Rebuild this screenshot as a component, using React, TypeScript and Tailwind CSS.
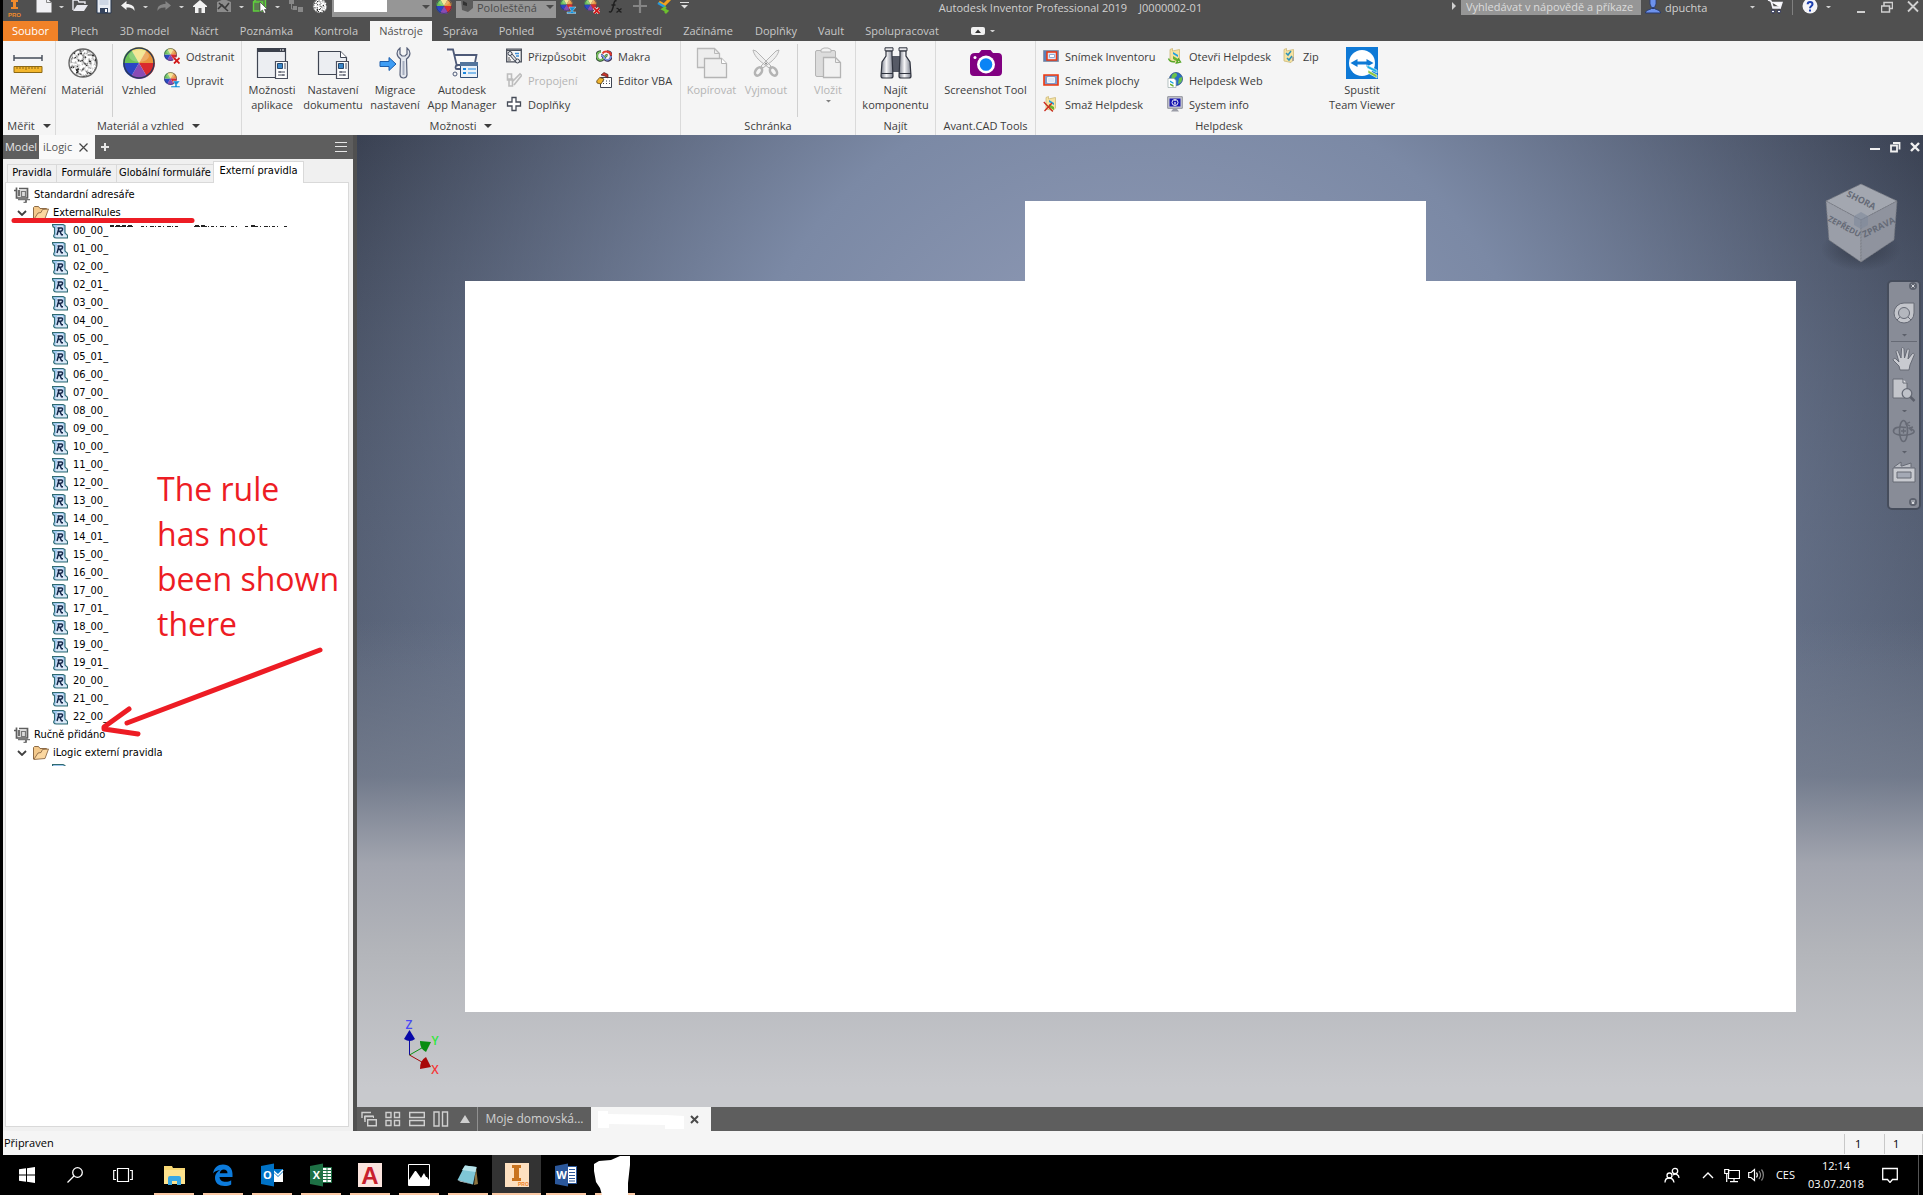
import type { ReactNode } from "react";
import clsx from "clsx";

type IconProps = { children?: ReactNode; className?: string; box?: string };

const Svg = ({ children, className = "size-4", box = "0 0 16 16" }: IconProps) => (
  <svg viewBox={box} className={clsx("shrink-0", className)} fill="none" aria-hidden="true">
    {children}
  </svg>
);

const Caret = ({ className = "w-[5px] text-[#d0d0d0]" }: { className?: string }) => (
  <Svg box="0 0 8 4" className={clsx("h-auto", className)}>
    <path d="M0 0h8L4 4z" fill="currentColor" />
  </Svg>
);

const WheelShape = () => (
  <g>
    <path d="M0 0L8-13.8A16 16 0 0 0-8-13.8z" fill="#f0e07a" />
    <path d="M0 0L16 0A16 16 0 0 0 8-13.8z" fill="#e8953c" />
    <path d="M0 0L8 13.8A16 16 0 0 0 16 0z" fill="#d92a2e" />
    <path d="M0 0L-8 13.8A16 16 0 0 0 8 13.8z" fill="#8a4bb5" />
    <path d="M0 0L-16 0A16 16 0 0 0-8 13.8z" fill="#2c46c4" />
    <path d="M0 0L-8-13.8A16 16 0 0 0-16 0z" fill="#6cc257" />
    <circle r="15" stroke="#2b3a58" strokeWidth="1.4" fill="none" />
    <ellipse cy="-7" rx="10" ry="6" fill="#fff" opacity=".22" />
  </g>
);

const Wheel = ({ className = "size-4" }: { className?: string }) => (
  <Svg className={className} box="-16 -16 32 32">
    <WheelShape />
  </Svg>
);

const WheelRemove = () => (
  <Svg>
    <g transform="translate(6.5 6.5) scale(.4)">
      <WheelShape />
    </g>
    <path d="M10 10l5 5m0-5l-5 5" stroke="#fff" strokeWidth="3" />
    <path d="M10 10l5.500 5.500m0-5.500l-5.500 5.500" stroke="#d01818" strokeWidth="1.800" />
  </Svg>
);

const WheelAdjust = () => (
  <Svg>
    <g transform="translate(6.5 6.5) scale(.4)">
      <WheelShape />
    </g>
    <path d="M9 9h7l-3 3.500v1.500h3v1.500H7V14h4v-1.500z" fill="#1590d8" stroke="#fff" strokeWidth=".4" />
  </Svg>
);

const Sphere = ({ className = "size-4" }: { className?: string }) => (
  <Svg className={className} box="0 0 32 32">
    <defs>
      <filter id="grain" x="0" y="0" width="1" height="1">
        <feTurbulence type="fractalNoise" baseFrequency=".32" numOctaves="3" seed="4" />
        <feColorMatrix values="3 0 0 0 -.85  3 0 0 0 -.85  3 0 0 0 -.85  0 0 0 0 1" />
        <feComposite in2="SourceGraphic" operator="in" />
      </filter>
    </defs>
    <circle cx="16" cy="16" r="14" fill="#a9a9a9" filter="url(#grain)" />
    <circle cx="16" cy="16" r="14" fill="#fff" fillOpacity=".2" stroke="#666" strokeWidth="1.400" />
  </Svg>
);

const Rule = ({ className = "size-4" }: { className?: string }) => (
  <Svg className={className}>
    <path d="M.5 1.500h10.500l2 1v7c.5 2.500 2.500 1 2.500 3.500v2H4.500c-3 0-3.500-2-2-4V4.500C1.500 4.500.5 4 .5 1.500z" fill="#9fc6ee" />
    <path d="M5 3h6l1 8 3 1v2.500H5c-2 0-2-2-1-3z" fill="#dbe9f7" />
    <path d="M.5 1.500h10.500l2 1v7c.5 2.500 2.500 1 2.500 3.500v2H4.500c-3 0-3.500-2-2-4V4.500C1.500 4.500.5 4 .5 1.500z" stroke="#2f6a70" strokeWidth="1.100" />
    <path d="M5 12L7 5M5.500 5h4c1.500 0 1.500 3-1 3.300H6M8 8.500l1.500 3.300h1.500" stroke="#14264a" strokeWidth="1.500" />
  </Svg>
);

const RootIcon = () => (
  <Svg>
    <path d="M3 3h10v9H3z" fill="#dcdcdc" />
    <path d="M0 3.500h2.500M2.500.500v10.500h11.500M5 1.500h8.500v10M12 12v3.500M5 3v6" stroke="#5f5f5f" strokeWidth="1.700" />
    <path d="M4 12.700h12M9.500 15.300h3M7.500 4.500h4v5h-4z" stroke="#777" strokeWidth="1.200" />
  </Svg>
);

const Folder = () => (
  <Svg>
    <path d="M.5 14V2.500l1-1h4l1.500 2h6.500V6" fill="#f4c98b" stroke="#8d6a45" />
    <path d="M.8 14.500L5 8l3-.5 1.500-3 6-.5-3.500 9.500z" fill="#fbd7a0" stroke="#8d6a45" strokeWidth=".9" />
  </Svg>
);

/* ---------- ribbon icons, 32px ---------- */

const big = "size-8";

const MeasureIcon = () => (
  <Svg className={big} box="0 0 32 32">
    <path d="M2 8v6M30 8v6M2 11h28" stroke="#444c58" strokeWidth="1.400" />
    <path d="M2 19.500h28v6H2z" fill="#f3b62c" stroke="#8d6914" />
    <path d="M5 20v2m3-2v2m3-2v2m3-2v3m3-3v2m3-2v2m3-2v2m3-2v2" stroke="#8d6914" />
  </Svg>
);

const PanelBadge = () => (
  <g>
    <path d="M19.500 14.500h12v17h-12z" fill="#fdfdfd" stroke="#4b4f5e" strokeWidth="1.200" />
    <path d="M21.500 16.500h5v5h-5z" fill="#3a86c8" stroke="#27496e" />
    <path d="M28 17h2m-2 2h2m-2 2h2M22 25h7m-7 3h7m-5-4v2m3 1v2" stroke="#4b4f5e" />
  </g>
);

const AppOptionsIcon = () => (
  <Svg className={big} box="0 0 32 32">
    <path d="M1.500 1.500h28v29h-28z" fill="#eceef2" stroke="#3f4552" strokeWidth="1.200" />
    <path d="M1 1h29v4H1z" fill="#3b404c" />
    <path d="M24 3h1m1 0h2" stroke="#fff" />
    <PanelBadge />
  </Svg>
);

const DocSettingsIcon = () => (
  <Svg className={big} box="0 0 32 32">
    <path d="M1.500 4.500h22l6 6v17h-28z" fill="#eceef2" stroke="#3f4552" strokeWidth="1.200" />
    <path d="M23.500 4.500v6h6" fill="#fff" stroke="#3f4552" />
    <PanelBadge />
  </Svg>
);

const MigrateIcon = () => (
  <Svg className={big} box="0 0 32 32">
    <path d="M1 14.500h9v-4l7 6.500-7 6.500v-4H1z" fill="#3e9df4" stroke="#1c5daa" />
    <path
      d="M21 1c-4 3-4 8 .5 11l-.5 16c.5 4 6.500 4 7 0l-.5-16c4.500-3 4.500-8 .5-11v6l-2 2h-3l-2-2z"
      fill="#e4e7ee"
      stroke="#59627a"
      strokeWidth="1.200"
    />
    <path d="M24.500 14v14" stroke="#a7aec0" strokeWidth="2" />
  </Svg>
);

const CartIcon = () => (
  <Svg className={big} box="0 0 32 32">
    <path d="M1 2.500h6l4 17M8 8h22.500l-2 10H11c-2 1-2 4 0 4h3" stroke="#4e5a78" strokeWidth="1.800" fill="#fafafa" />
    <circle cx="9" cy="27" r="2" stroke="#4e5a78" />
    <path d="M14.500 15.500h17v15h-17z" fill="#eaf1f8" stroke="#2f4c74" />
    <path d="M14 15h18v4H14z" fill="#53759c" />
    <path d="M17 22h3m-3 4h3" stroke="#1987e0" strokeWidth="2" />
    <path d="M22 22h8m-8 4h8" stroke="#1987e0" />
  </Svg>
);

const CopyIcon = () => (
  <Svg className={big} box="0 0 32 32">
    <path d="M1.500 1.500h17l5 5v14h-22z" fill="#ededed" stroke="#b9b9b9" strokeWidth="1.300" />
    <path d="M18.500 1.500v5h5" stroke="#b9b9b9" />
    <path d="M8.500 11.500h17l5 5v14h-22z" fill="#f0f0f0" stroke="#b4b4b4" strokeWidth="1.300" />
    <path d="M25.500 11.500v5h5" fill="#fff" stroke="#b4b4b4" />
  </Svg>
);

const CutIcon = () => (
  <Svg className={big} box="0 0 32 32">
    <path d="M3 3c1 5 5 10 11 14l5 4 2-2L6 4zM29 3c-1 5-5 10-11 14l-5 4-2-2L26 4z" fill="#efefef" stroke="#b4b4b4" />
    <ellipse cx="8.500" cy="24.500" rx="3" ry="4.500" transform="rotate(35 8.500 24.500)" stroke="#b4b4b4" strokeWidth="2.600" />
    <ellipse cx="23.500" cy="24.500" rx="3" ry="4.500" transform="rotate(-35 23.500 24.500)" stroke="#b4b4b4" strokeWidth="2.600" />
    <circle cx="16" cy="16.500" r="1" fill="#888" />
  </Svg>
);

const PasteIcon = () => (
  <Svg className={big} box="0 0 32 32">
    <rect x="3.500" y="3.500" width="20" height="26" rx="1.500" fill="#dcdcdc" stroke="#b4b4b4" />
    <path d="M9 5V2.500l3-1.500h4l3 1.500V5z" fill="#f2f2f2" stroke="#b4b4b4" />
    <path d="M11.500 10.500h12l5 5v15h-17z" fill="#f1f1f1" stroke="#b4b4b4" strokeWidth="1.300" />
    <path d="M23.500 10.500v5h5" stroke="#b4b4b4" />
  </Svg>
);

const BinocularsIcon = () => (
  <Svg className={big} box="0 0 32 32">
    <defs>
      <linearGradient id="steel" x1="0" x2="1">
        <stop offset="0" stopColor="#767b88" />
        <stop offset=".45" stopColor="#f6f6f8" />
        <stop offset="1" stopColor="#7c818e" />
      </linearGradient>
    </defs>
    <path d="M11 9h10v16H11z" fill="#565a66" />
    <path d="M6 4h6v5l1 20q0 2-2 2H3q-2 0-2-2l1-14 4-6z" fill="url(#steel)" stroke="#30343f" strokeWidth="1.200" />
    <path d="M26 4h-6v5l-1 20q0 2 2 2h8q2 0 2-2l-1-14-4-6z" fill="url(#steel)" stroke="#30343f" strokeWidth="1.200" />
    <path d="M5 .8h8v3H5zM19 .8h8v3h-8z" fill="#e9e9ec" stroke="#30343f" />
    <path d="M1 26.500h12M19 26.500h12" stroke="#30343f" />
  </Svg>
);

const CameraIcon = () => (
  <Svg className={big} box="0 0 32 32">
    <path d="M9 6l2.500-3h9L23 6h5q4 0 4 4v15q0 4-4 4H4q-4 0-4-4V11q0-5 5-5z" fill="#810081" />
    <circle cx="16" cy="17.500" r="9" fill="#fff" />
    <circle cx="16" cy="17.500" r="6.300" fill="#0a84f5" />
    <circle cx="5" cy="10.500" r="1.500" fill="#fff" />
  </Svg>
);

const TeamViewerIcon = () => (
  <Svg className={big} box="0 0 32 32">
    <path d="M0 0h32v32H0z" fill="#0e79d6" />
    <circle cx="16" cy="16" r="13" fill="#fff" />
    <path d="M4.500 16l7-4v2.500h9V12l7 4-7 4v-2.500h-9V20z" fill="#0e79d6" />
    <path d="M21 18l10 5v3l-10-5z" fill="#1bb0e8" stroke="#fff" strokeWidth=".6" />
    <path d="M22 23l9 5v3l-9-5z" fill="#8cc63f" stroke="#fff" strokeWidth=".6" />
  </Svg>
);

/* ---------- ribbon icons, 16px ---------- */

const CustomizeIcon = () => (
  <Svg>
    <path d="M.7 1.200h14.600v12.600H.7z" fill="#f6f6f6" stroke="#4a4f5a" strokeWidth="1.300" />
    <path d="M1 2.500h14" stroke="#4a4f5a" />
    <path d="M9 5.500h4m-3 2.500h3" stroke="#3d8ed8" strokeWidth="1.300" />
    <path d="M2 12h3m-3-2h2" stroke="#555" />
    <path d="M4 5.500l7 8" stroke="#3f4552" strokeWidth="3.400" />
    <path d="M4 5.500l7 8" stroke="#e9ebf0" strokeWidth="1.600" />
    <circle cx="4" cy="5.500" r="2" fill="#e9ebf0" stroke="#3f4552" />
    <circle cx="11.500" cy="13" r="2" fill="#e9ebf0" stroke="#3f4552" />
  </Svg>
);
const LinkIcon = () => (
  <Svg>
    <path d="M1.500 2h4v6h-4zM3 7h3.500v7H3zM6 10l8-8 1.500 1.500L8 13" stroke="#bdbdbd" strokeWidth="1.600" />
  </Svg>
);
const AddInsIcon = () => (
  <Svg>
    <path d="M6 1.500h4V6h4.500v4H10v4.500H6V10H1.500V6H6z" fill="#fff" stroke="#454b57" strokeWidth="1.300" />
  </Svg>
);
const MacrosIcon = () => (
  <Svg>
    <path d="M5 3.500C1.500 3.500.8 6 .8 8s1 4.500 4.200 4.500c3 0 4-5.500 6.500-5.500" stroke="#2f4a34" strokeWidth="2.600" />
    <path d="M11 3.500c3.500 0 4.200 2.500 4.200 4.500s-1 4.500-4.200 4.500C8 12.500 7.500 7 5 7" stroke="#3a2f52" strokeWidth="2.600" />
    <path d="M5 4c-3 0-4 2-4 4s1 4 4 4 4-5 6.500-5" stroke="#7cc860" strokeWidth="1.500" />
    <path d="M5 7c2.500 0 3.500 5 6 5s4-2 4-4" stroke="#7f9cf0" strokeWidth="1.500" />
    <path d="M6.500 5.500c2-3 8.500-2.500 8.500 2" stroke="#e0392c" strokeWidth="2" />
  </Svg>
);
const VbaIcon = () => (
  <Svg>
    <path d="M4.500 5.500h11v10h-11z" fill="#fff" stroke="#3f4552" />
    <path d="M7 9h1m2 0h1m2 0h1M7 11.500h1m2 0h1m2 0h1" stroke="#3f4552" />
    <path d="M5 3l3-2.500 4 2V6L9 4z" fill="#c8352c" stroke="#4b1b18" strokeWidth=".7" />
    <path d="M.7 9l3-3.500L8 7l-3 5-4-1z" fill="#f2b52e" stroke="#5d4411" strokeWidth=".8" />
  </Svg>
);
const SnapWindowIcon = () => (
  <Svg>
    <path d="M.5 2.500h15v11H.5z" fill="#5a7fb8" stroke="#8b98ad" />
    <path d="M4 4h9.500v8H4z" fill="#dbe7fa" stroke="#f0380e" strokeWidth="1.500" />
    <path d="M6.500 6.500h5v3h-5z" fill="#fff" stroke="#94abd4" />
  </Svg>
);
const SnapDesktopIcon = () => (
  <Svg>
    <path d="M1 3h14v10H1z" fill="#7d99cc" stroke="#f0380e" strokeWidth="1.600" />
    <path d="M4.500 5.500h7v5h-7z" fill="#dce7f8" stroke="#f3f3f3" />
  </Svg>
);
const Strokes = () => (
  <g>
    <path d="M6 4l5 3v2L6 6z" fill="#1d9fe0" />
    <path d="M6 8l5 3v3L6 11z" fill="#6ab42e" />
  </g>
);
const FolderPage = () => (
  <path d="M3 1.500l2.500-1V3l7-1.500V12L10 14.500 3 13z" fill="#f6e3a2" stroke="#cdb978" strokeWidth=".8" />
);
const DeleteHelpdeskIcon = () => (
  <Svg>
    <FolderPage />
    <Strokes />
    <path d="M.8 6l9 9.500M9 7L1.500 15" stroke="#cc2a1e" strokeWidth="1.300" />
  </Svg>
);
const OpenHelpdeskIcon = () => (
  <Svg>
    <FolderPage />
    <Strokes />
    <path d="M1.500 10.500c1 3 4 3.500 6.500 3M9.500 15l2-4 2 3z" stroke="#58a82a" strokeWidth="1.400" />
  </Svg>
);
const WebIcon = () => (
  <Svg>
    <circle cx="9" cy="7" r="6.500" fill="#2a6fc4" stroke="#1c3f78" strokeWidth=".7" />
    <path d="M5 3c3-3 5-2 5 0s-3 2-3 5-4-1-2-5zM12 6l3-1c1 4-2 7-4 7z" fill="#6cc24a" />
    <path d="M1 6.500h6l2 2v7H1z" fill="#fff" stroke="#9aa" strokeWidth=".7" />
    <path d="M3 8.500l3.500 2v1.500L3 10z" fill="#1d9fe0" />
    <path d="M3 11.500l3.500 1.500v2L3 13z" fill="#6ab42e" />
  </Svg>
);
const SystemInfoIcon = () => (
  <Svg>
    <path d="M.7.700h14.600v11.600H.7z" fill="#c9cad0" stroke="#8f919c" />
    <path d="M2.500 2.500h11v8h-11z" fill="#1717b0" />
    <circle cx="8" cy="6.500" r="3" stroke="#fff" strokeWidth=".9" />
    <path d="M8 6v2.500M8 4v1" stroke="#fff" strokeWidth="1.200" />
    <path d="M6 13h4l2 2.500H4z" fill="#9a9ca6" />
  </Svg>
);
const ZipIcon = () => (
  <Svg>
    <FolderPage />
    <path d="M5 5l2 2 3-4M6 10l2 2 3-4" stroke="#2d92b8" strokeWidth="1.500" />
    <path d="M12 9v4" stroke="#999" strokeWidth="1.500" />
  </Svg>
);

/* ---------- title bar ---------- */

// the quick access icons are cut by the top edge of the screen
const TopIcon = ({ children }: { children: ReactNode }) => (
  <Svg box="0 2 16 14" className="h-[14px] w-4">
    {children}
  </Svg>
);

const QuickButton = ({ label, children, drop }: { label: string; children: ReactNode; drop?: boolean }) => (
  <button aria-label={label} className="flex h-[14px] items-center gap-[7px]">
    {children}
    {drop && <Caret />}
  </button>
);

const TitleBar = () => (
  <header className="flex h-[21px] items-start overflow-hidden bg-[#505050] pl-[5px] text-[11px] leading-[15px] text-[#d0d0d0]">
    <div className="flex gap-2">
      <Svg box="0 0 20 18" className="h-[18px] w-5">
        <path d="M3 0h7v2H8v5h2v2H3V7h2V2H3z" fill="#ef8a2c" />
        <text x="0" y="17" fontSize="6" fontWeight="bold" fill="#ef8a2c" fontFamily="Liberation Sans">
          PRO
        </text>
      </Svg>
      <QuickButton label="Nový" drop>
        <TopIcon>
          <path d="M.5 0h10l5 4.500v10H.5z" fill="#f1f1f4" />
          <path d="M10.500 0v4.500h5" stroke="#888" />
        </TopIcon>
      </QuickButton>
      <QuickButton label="Otevřít">
        <TopIcon>
          <path d="M1 12V2h5l1 2h6v2" stroke="#e8e8ee" strokeWidth="1.400" />
          <path d="M1 13l4-6h11l-4 6z" fill="#e8e8ee" />
        </TopIcon>
      </QuickButton>
      <QuickButton label="Uložit">
        <TopIcon>
          <path d="M1 0h14v15H1z" fill="#e9edf4" stroke="#27364f" />
          <path d="M3.500 0h9v7h-9z" fill="#cdd6e4" />
          <path d="M4 10h8v5H4z" fill="#35445e" />
          <path d="M9 11h2v3H9z" fill="#fff" />
        </TopIcon>
      </QuickButton>
      <QuickButton label="Zpět" drop>
        <TopIcon>
          <path d="M1 7.500L6.500 3v3c5 0 8.500 2 8 7-1.500-3-4-3.500-8-3.500V12z" fill="#f2f2f2" />
        </TopIcon>
      </QuickButton>
      <QuickButton label="Znovu" drop>
        <TopIcon>
          <path d="M15 7.500L9.500 3v3C4.500 6 1 8 1.500 13c1.500-3 4-3.500 8-3.500V12z" fill="#858585" />
        </TopIcon>
      </QuickButton>
      <QuickButton label="Domů">
        <TopIcon>
          <path d="M1 8l7-6 7 6v1h-2v6H3V9H1z" fill="#f2f2f2" />
          <path d="M6.500 10h3v5h-3z" fill="#666" />
        </TopIcon>
      </QuickButton>
      <QuickButton label="Aktualizovat" drop>
        <TopIcon>
          <path d="M1 4l7-3 7 3v10H1z" fill="#8c8c8c" />
          <path d="M2 11l4-4 3 3 4-5M3 5l9 8" stroke="#3b3b3b" strokeWidth="1.600" />
        </TopIcon>
      </QuickButton>
      <QuickButton label="Vybrat" drop>
        <TopIcon>
          <path d="M1.500 4h9v9h-9zM1.500 4l3-3h9v9l-3 3" fill="#5d7a52" stroke="#5ed03c" strokeWidth="1.400" />
          <path d="M8 4v10l2.500-2 1.500 3.500 2-1-1.500-3h3z" fill="#fff" stroke="#333" strokeWidth=".6" />
        </TopIcon>
      </QuickButton>
      <QuickButton label="Struktura">
        <TopIcon>
          <path d="M1 1h5v5H1zM10 9h5v5h-5zM5 8h4v4H5z" fill="#888" />
          <path d="M3.500 6v5H9" stroke="#888" />
        </TopIcon>
      </QuickButton>
      <div className="flex items-start gap-1">
        <button aria-label="Materiál" className="h-[14px] overflow-hidden">
          <Sphere className="-mt-[2px] size-4" />
        </button>
        <div className="relative h-[17px] w-[100px]">
          <select aria-label="Výběr materiálu" className="h-full w-full appearance-none bg-[#969696]">
            <option></option>
          </select>
          <div className="absolute top-0 left-[2px] h-[12px] w-[53px] bg-white" />
          <Caret className="absolute top-[5px] right-[2px] w-[8px] text-[#4a4a4a]" />
        </div>
        <button aria-label="Vzhled" className="h-[14px] overflow-hidden">
          <Wheel className="-mt-[2px] size-4" />
        </button>
        <div className="relative h-[17px] w-[100px]">
          <select
            aria-label="Výběr vzhledu"
            className="h-full w-full appearance-none bg-[#969696] pr-3 pb-[3px] pl-[21px] text-[11px] leading-[14px] text-[#4c4c4c]"
          >
            <option>Pololeštěná</option>
          </select>
          <Svg className="absolute top-0 left-[4px] h-3 w-[14px]" box="0 0 14 12">
            <path d="M1 0h12v8l-5 4-6-2z" fill="#5c5c5c" />
            <path d="M3 1l4 2v3L3 5z" fill="#333" />
          </Svg>
          <Caret className="absolute top-[5px] right-[2px] w-[8px] text-[#4a4a4a]" />
        </div>
        <button aria-label="Upravit vzhled" className="h-[14px] overflow-hidden">
          <div className="-mt-[2px]">
            <WheelAdjust />
          </div>
        </button>
      </div>
      <button aria-label="Odstranit vzhled" className="h-[14px] overflow-hidden">
        <div className="-mt-[2px]">
          <WheelRemove />
        </div>
      </button>
      <QuickButton label="Parametry">
        <TopIcon>
          <path d="M8.500 3C6 1.500 6 6 5 9.500S3 15 1 13.500M3.500 7h4" stroke="#1f1f1f" strokeWidth="1.500" />
          <path d="M8.500 10.500c3-1 2 4 5 3.500M13.500 10.500l-5 4" stroke="#1f1f1f" strokeWidth="1.300" />
        </TopIcon>
      </QuickButton>
      <QuickButton label="Přidat">
        <TopIcon>
          <path d="M8 1v14M1 8h14" stroke="#858585" strokeWidth="2.200" />
        </TopIcon>
      </QuickButton>
      <QuickButton label="Štětec">
        <TopIcon>
          <path d="M3 4l5 3 6-6" stroke="#f2a21c" strokeWidth="3" />
          <path d="M2 5l7 4" stroke="#2099e0" strokeWidth="2.500" />
          <path d="M10 9l-3 2 4 2-2 2" stroke="#6cc02e" strokeWidth="2.600" />
        </TopIcon>
      </QuickButton>
      <button aria-label="Přizpůsobit panel" className="flex h-[11px] w-[9px] flex-col items-center justify-center gap-[2px]">
        <span className="h-px w-[9px] bg-[#e0e0e0]" />
        <Caret className="w-[7px] text-[#e0e0e0]" />
      </button>
    </div>
    <h1 className="flex flex-1 justify-center gap-3">
      <span>Autodesk Inventor Professional 2019</span>
      <span>J0000002-01</span>
    </h1>
    <div className="flex items-start">
      <Svg box="0 0 4 8" className="mt-[2px] mr-[5px] h-2 w-1">
        <path d="M0 0l4 4-4 4z" fill="#d0d0d0" />
      </Svg>
      <input
        aria-label="Vyhledávat v nápovědě"
        defaultValue="Vyhledávat v nápovědě a příkaze"
        className="h-[15px] w-[180px] bg-[#969696] pb-[2px] pl-[5px] text-[11px] text-[#dcdcdc]"
      />
      <Svg box="0 2 16 14" className="mx-1 h-[14px] w-4">
        <path d="M5 0h6v6l-1.500 3.500h-3L5 6z" fill="#6d92ee" stroke="#26396e" strokeWidth=".8" />
        <path d="M.5 15c0-3 4-3 6-4.500h3C11.500 12 15.500 12 15.500 15z" fill="#6d92ee" stroke="#26396e" />
      </Svg>
      <button className="flex w-[90px] items-center justify-between">
        dpuchta <Caret />
      </button>
      <Svg box="0 2 16 14" className="mr-[9px] ml-3 h-[14px] w-4">
        <path d="M1 2l3 1 2 7h8M4.500 4.500H15L13.500 9H6z" fill="#fff" stroke="#f4f4fa" strokeWidth="1.500" />
        <circle cx="6" cy="13.500" r="1.500" fill="#fff" stroke="#1d2550" />
        <circle cx="12" cy="13.500" r="1.500" fill="#fff" stroke="#1d2550" />
      </Svg>
      <span className="mr-[9px] h-[15px] w-px bg-[#808080]" />
      <button aria-label="Nápověda" className="flex h-[14px] items-center gap-2">
        <Svg box="0 2 16 14" className="h-[14px] w-4">
          <circle cx="8" cy="8" r="7.500" fill="#f4f4f8" />
          <path d="M5.700 6.300c0-3 4.800-3 4.800 0C10.500 8 8 8 8 10.300M8 11.500v2" stroke="#1c3fae" strokeWidth="2" />
        </Svg>
        <Caret />
      </button>
      <div className="flex gap-[14px] pr-[4px] pl-[24px] text-[#d0d0d0]">
        <button aria-label="Minimalizovat">
          <Svg box="0 0 12 14" className="h-[14px] w-3">
            <path d="M2 12h8" stroke="currentColor" strokeWidth="2" />
          </Svg>
        </button>
        <button aria-label="Obnovit">
          <Svg box="0 0 12 14" className="h-[14px] w-3">
            <path d="M.5 6h8v6h-8zM3 6V2.500h8.500v6H9" stroke="currentColor" strokeWidth="1.500" />
          </Svg>
        </button>
        <button aria-label="Zavřít">
          <Svg box="0 0 12 14" className="h-[14px] w-3">
            <path d="M1 1.500l10 10M11 1.500l-10 10" stroke="currentColor" strokeWidth="1.800" />
          </Svg>
        </button>
      </div>
    </div>
  </header>
);

/* ---------- ribbon ---------- */

const ribbonTabs = [
  { name: "Soubor", width: "w-[55px]" },
  { name: "Plech", width: "w-[53px]" },
  { name: "3D model", width: "w-[67px]" },
  { name: "Náčrt", width: "w-[53px]" },
  { name: "Poznámka", width: "w-[71px]" },
  { name: "Kontrola", width: "w-[68px]" },
  { name: "Nástroje", width: "w-[62px]" },
  { name: "Správa", width: "w-[57px]" },
  { name: "Pohled", width: "w-[55px]" },
  { name: "Systémové prostředí", width: "w-[130px]" },
  { name: "Začínáme", width: "w-[68px]" },
  { name: "Doplňky", width: "w-[68px]" },
  { name: "Vault", width: "w-[42px]" },
  { name: "Spolupracovat", width: "w-[100px]" },
];

const RibbonTabs = () => (
  <nav className="flex h-5 items-center bg-[#505050] text-[11px] text-[#c8c8c8]">
    {ribbonTabs.map((tab) => (
      <button
        key={tab.name}
        className={clsx(
          "h-full whitespace-nowrap",
          tab.width,
          tab.name === "Soubor" && "bg-[#f08228] text-white",
          tab.name === "Nástroje" && "bg-[#f5f5f5] text-[#505050]",
        )}
      >
        {tab.name}
      </button>
    ))}
    <button aria-label="Sbalit pás karet" className="ml-[19px] flex items-center gap-[5px]">
      <Svg box="0 0 14 8" className="h-2 w-[14px]">
        <rect width="14" height="8" rx="2" fill="#f0f0f0" />
        <path d="M4 6h6L7 2.500z" fill="#333" />
      </Svg>
      <Caret />
    </button>
  </nav>
);

type BigProps = { icon: ReactNode; lines: string[]; width: string; disabled?: boolean; drop?: boolean };

const BigButton = ({ icon, lines, width, disabled, drop }: BigProps) => (
  <button
    disabled={disabled}
    className={clsx("flex shrink-0 flex-col items-center pt-[3px] whitespace-nowrap", width, disabled && "text-[#b4b4b4]")}
  >
    {icon}
    <span className="mt-[3px]">
      {lines.map((line) => (
        <span key={line} className="block">
          {line}
        </span>
      ))}
    </span>
    {drop && <Caret className="mt-[3px] w-[5px] text-[#808080]" />}
  </button>
);

const SmallButton = ({ icon, label, disabled }: { icon: ReactNode; label: string; disabled?: boolean }) => (
  <button
    disabled={disabled}
    className={clsx("flex h-6 items-center gap-[6px] whitespace-nowrap", disabled && "text-[#b4b4b4]")}
  >
    {icon}
    {label}
  </button>
);

const Group = ({ label, width, drop, children }: { label: string; width: string; drop?: boolean; children: ReactNode }) => (
  <section className={clsx("flex shrink-0 flex-col border-r border-[#dadada] pt-[3px]", width)}>
    <div className="flex h-[73px]">{children}</div>
    <div className="flex h-[17px] items-center justify-center gap-2 whitespace-nowrap">
      {label}
      {drop && <Caret className="w-2 text-[#3c3c3c]" />}
    </div>
  </section>
);

const Divider = () => <span className="mx-[3px] h-full w-px shrink-0 bg-[#d0d0d0]" />;

const Ribbon = () => (
  <div className="flex h-[94px] overflow-hidden bg-[#f5f5f5] text-[11px] leading-[15px] text-[#3c3c3c]">
    <Group label="Měřit" width="w-[53px]" drop>
      <BigButton icon={<MeasureIcon />} lines={["Měření"]} width="w-[50px]" />
    </Group>
    <Group label="Materiál a vzhled" width="w-[186px]" drop>
      <BigButton icon={<Sphere className={big} />} lines={["Materiál"]} width="w-[53px]" />
      <Divider />
      <BigButton icon={<Wheel className={big} />} lines={["Vzhled"]} width="w-[46px]" />
      <div className="pl-[2px]">
        <SmallButton icon={<WheelRemove />} label="Odstranit" />
        <SmallButton icon={<WheelAdjust />} label="Upravit" />
      </div>
    </Group>
    <Group label="Možnosti" width="w-[439px]" drop>
      <BigButton icon={<AppOptionsIcon />} lines={["Možnosti", "aplikace"]} width="w-[60px]" />
      <BigButton icon={<DocSettingsIcon />} lines={["Nastavení", "dokumentu"]} width="w-[62px]" />
      <BigButton icon={<MigrateIcon />} lines={["Migrace", "nastavení"]} width="w-[62px]" />
      <BigButton icon={<CartIcon />} lines={["Autodesk", "App Manager"]} width="w-[72px]" />
      <div className="ml-2 w-[90px]">
        <SmallButton icon={<CustomizeIcon />} label="Přizpůsobit" />
        <SmallButton icon={<LinkIcon />} label="Propojení" disabled />
        <SmallButton icon={<AddInsIcon />} label="Doplňky" />
      </div>
      <div>
        <SmallButton icon={<MacrosIcon />} label="Makra" />
        <SmallButton icon={<VbaIcon />} label="Editor VBA" />
      </div>
    </Group>
    <Group label="Schránka" width="w-[175px]">
      <BigButton icon={<CopyIcon />} lines={["Kopírovat"]} width="w-[61px]" disabled />
      <BigButton icon={<CutIcon />} lines={["Vyjmout"]} width="w-[48px]" disabled />
      <span className="w-1" />
      <Divider />
      <BigButton icon={<PasteIcon />} lines={["Vložit"]} width="w-[54px]" disabled drop />
    </Group>
    <Group label="Najít" width="w-[80px]">
      <BigButton icon={<BinocularsIcon />} lines={["Najít", "komponentu"]} width="w-[79px]" />
    </Group>
    <Group label="Avant.CAD Tools" width="w-[100px]">
      <BigButton icon={<CameraIcon />} lines={["Screenshot Tool"]} width="w-[99px]" />
    </Group>
    <section className="w-[366px] shrink-0 pt-[3px]">
      <div className="flex h-[73px] pl-[7px]">
        <div className="w-[124px]">
          <SmallButton icon={<SnapWindowIcon />} label="Snímek Inventoru" />
          <SmallButton icon={<SnapDesktopIcon />} label="Snímek plochy" />
          <SmallButton icon={<DeleteHelpdeskIcon />} label="Smaž Helpdesk" />
        </div>
        <div className="w-[114px]">
          <SmallButton icon={<OpenHelpdeskIcon />} label="Otevři Helpdesk" />
          <SmallButton icon={<WebIcon />} label="Helpdesk Web" />
          <SmallButton icon={<SystemInfoIcon />} label="System info" />
        </div>
        <div className="w-[45px]">
          <SmallButton icon={<ZipIcon />} label="Zip" />
        </div>
        <BigButton icon={<TeamViewerIcon />} lines={["Spustit", "Team Viewer"]} width="w-[72px]" />
      </div>
      <div className="flex h-[17px] items-center justify-center">Helpdesk</div>
    </section>
  </div>
);

/* ---------- iLogic panel ---------- */

const rules = [
  "00_00_", "01_00_", "02_00_", "02_01_", "03_00_", "04_00_", "05_00_",
  "05_01_", "06_00_", "07_00_", "08_00_", "09_00_", "10_00_", "11_00_",
  "12_00_", "13_00_", "14_00_", "14_01_", "15_00_", "16_00_", "17_00_",
  "17_01_", "18_00_", "19_00_", "19_01_", "20_00_", "21_00_", "22_00_",
];

const FolderRow = ({ name }: { name: string }) => (
  <div className="flex h-[18px] items-center pl-[11px]">
    <button aria-label="Sbalit">
      <Svg box="0 0 10 6" className="h-[6px] w-[10px]">
        <path d="M1 1l4 4 4-4" stroke="#404040" strokeWidth="1.800" />
      </Svg>
    </button>
    <span className="ml-[6px] flex items-center gap-1">
      <Folder />
      {name}
    </span>
  </div>
);

const RootRow = ({ name }: { name: string }) => (
  <div className="flex h-[18px] items-center gap-1 pl-2">
    <RootIcon />
    {name}
  </div>
);

const formTabs = [
  { name: "Pravidla", width: "w-[49px]" },
  { name: "Formuláře", width: "w-[60px]" },
  { name: "Globální formuláře", width: "w-[97px]" },
];

const RulesPanel = () => (
  <aside className="flex w-[350px] shrink-0 flex-col bg-[#f0f0f0]">
    <div className="flex h-6 shrink-0 items-center bg-[#5e5e5e] font-['Open_Sans','Noto_Sans',sans-serif] text-[#e6e6e6]">
      <button className="w-9">Model</button>
      <div className="flex h-full w-14 items-center justify-between bg-[#f9f9f9] pr-[7px] pl-1 text-[#555]">
        <span>iLogic</span>
        <button aria-label="Zavřít iLogic">
          <Svg box="0 0 9 9" className="size-[9px]">
            <path d="M.5.500l8 8m0-8l-8 8" stroke="#444" strokeWidth="1.200" />
          </Svg>
        </button>
      </div>
      <button aria-label="Přidat panel" className="ml-[6px]">
        <Svg box="0 0 8 8" className="size-2">
          <path d="M4 0v8M0 4h8" stroke="#e6e6e6" strokeWidth="2" />
        </Svg>
      </button>
      <button aria-label="Nabídka" className="mr-[6px] ml-auto">
        <Svg box="0 0 12 10" className="h-[10px] w-3">
          <path d="M0 .5h12M0 4.500h12M0 9.500h12" stroke="#e6e6e6" />
        </Svg>
      </button>
    </div>
    <div className="flex h-[23px] shrink-0 items-end pl-1 text-black">
      {formTabs.map((tab) => (
        <button key={tab.name} className={clsx("h-[18px] border-t border-l border-[#d9d9d9] whitespace-nowrap", tab.width)}>
          {tab.name}
        </button>
      ))}
      <button className="relative z-10 -mb-px h-[22px] w-[91px] border border-b-0 border-[#d9d9d9] bg-white pb-[2px] whitespace-nowrap">
        Externí pravidla
      </button>
    </div>
    <div className="mr-1 mb-1 ml-[2px] flex-1 border border-[#d9d9d9] bg-white pt-[3px] text-black">
      <RootRow name="Standardní adresáře" />
      <FolderRow name="ExternalRules" />
      <ul>
        {rules.map((rule) => (
          <li key={rule} className="flex h-[18px] items-center gap-[5px] pl-[46px]">
            <Rule />
            {rule}
          </li>
        ))}
      </ul>
      <RootRow name="Ručně přidáno" />
      <FolderRow name="iLogic externí pravidla" />
      <div className="h-[4px] overflow-hidden pt-[1px] pl-[46px]">
        <Rule />
      </div>
    </div>
  </aside>
);

// hand-drawn marks over the rules tree
const Markup = () => (
  <div className="pointer-events-none absolute top-0 left-0 h-[640px] w-[350px]">
    <svg viewBox="0 0 350 640" className="absolute inset-0 h-[640px] w-[350px]" fill="none" aria-hidden="true">
      <path
        d="M107 91.500h26M138 91.500h39M191 91.500h34M228 91.500h6M242 91.500h5M252 91.500h24M281 91.500h3"
        stroke="#222"
        strokeDasharray="3 2 1 3 4 1 1 2"
      />
      <path d="M107 91h22M192 91h12M248 91h5" stroke="#222" strokeWidth="2" strokeDasharray="4 2" />
      <g stroke="#ed1c24" strokeWidth="5" strokeLinecap="round" strokeLinejoin="round">
        <path d="M11 85.500h178" />
        <path d="M317 515L124 588" />
        <path d="M126 574L101 592V594L135 599" />
      </g>
    </svg>
    <p className="absolute top-[331px] left-[154px] w-[190px] text-[32px] leading-[45px] text-[#ed1c24]">
      The rule
      <br />
      has not
      <br />
      been shown
      <br />
      there
    </p>
  </div>
);

/* ---------- graphics window ---------- */

const ViewCube = () => (
  <svg viewBox="0 0 90 100" className="absolute top-[40px] right-[17px] h-[100px] w-[90px]" aria-hidden="true">
    <defs>
      <radialGradient id="cubeShadow">
        <stop offset="0" stopColor="#2f3542" stopOpacity=".75" />
        <stop offset="1" stopColor="#2f3542" stopOpacity="0" />
      </radialGradient>
    </defs>
    <ellipse cx="45" cy="74" rx="40" ry="22" fill="url(#cubeShadow)" />
    <g stroke="#777a82" strokeDasharray="2 1" strokeWidth=".8">
      <path d="M45 9L81 26 45 45 10 26z" fill="#a3a7b0" />
      <path d="M10 26L45 45V87L13 65z" fill="#9a9ea8" />
      <path d="M81 26L45 45V87L78 65z" fill="#8f939e" />
    </g>
    <path d="M38 41l7-4 7 4v9l-7 4-7-4z" fill="#7f889b" opacity=".6" />
    <g fontFamily="Open Sans" fontWeight="bold" fontSize="9" fill="#666b77" textAnchor="middle">
      <text transform="translate(44 28) rotate(27)">SHORA</text>
      <text fontSize="8" transform="translate(27 54) rotate(28)">
        ZEPŘEDU
      </text>
      <text fontSize="9" transform="translate(64 55) rotate(-26)">
        ZPRAVA
      </text>
    </g>
  </svg>
);

const NavBar = () => (
  <div className="absolute top-[145px] right-[2px] flex h-[230px] w-[34px] flex-col items-center rounded-[5px] border-2 border-[#464d5c] bg-[#888c97] text-[#5c606b]">
    <button aria-label="Zavřít navigaci" className="mr-[2px] self-end">
      <Svg box="0 0 8 8" className="size-2">
        <circle cx="4" cy="4" r="4" fill="#5d626e" />
        <path d="M2.500 2.500l3 3m0-3l-3 3" stroke="#d7d9de" />
      </Svg>
    </button>
    <button aria-label="Navigační kolečko" className="mt-3">
      <Svg box="0 0 22 22" className="size-[22px]">
        <path d="M11 1h10v10a10 10 0 1 1-10-10z" fill="#c3c5cb" stroke="#666a75" />
        <circle cx="11" cy="11" r="5.500" fill="#b4b7be" stroke="#666a75" />
        <path d="M7 15l-3 3M15 15l3 3" stroke="#666a75" />
      </Svg>
    </button>
    <Caret className="mt-[10px] w-[5px]" />
    <span className="mt-[4px] h-px w-[26px] shrink-0 bg-[#666a75]" />
    <button aria-label="Posun" className="mt-[5px]">
      <Svg box="0 0 24 24" className="size-6">
        <path
          d="M8 23l-1-4-6-6c0-2 2-2 3-1l3 3L4 5c0-2 2-2 2.500 0L9 11 9.500 2c0-2 2-2 2.500 0l.5 9L15 3c.5-2 2.500-1 2.300.5L16 12l4-5c1-1.500 3-.5 2 1.500L18 18l-1 5z"
          fill="#c8cad0"
          stroke="#666a75"
        />
      </Svg>
    </button>
    <button aria-label="Lupa" className="mt-[7px]">
      <Svg box="0 0 24 24" className="size-6">
        <path d="M1 1h10l4 4v15H1z" fill="#c3c5cb" stroke="#666a75" />
        <path d="M11 1v4h4" fill="#dfe0e4" stroke="#666a75" />
        <circle cx="15" cy="15.500" r="4.800" fill="#bfc2c9" stroke="#666a75" strokeWidth="1.300" />
        <path d="M18.500 19l4 4" stroke="#5c606b" strokeWidth="2.500" />
      </Svg>
    </button>
    <Caret className="mt-[8px] w-[5px]" />
    <button aria-label="Orbita" className="mt-[7px]">
      <Svg box="0 0 24 24" className="size-6">
        <ellipse cx="11.500" cy="12" rx="4" ry="10.500" stroke="#666a75" strokeWidth="1.600" />
        <path d="M14 8.500C6 7 1 9 1.500 12.500s9 4.500 16 3c6-1.500 6-4 1-6" stroke="#666a75" strokeWidth="1.600" />
        <path d="M9 12h5m-2.500-2.500v5M18 3l-4 2 4 2M21 8l-4 1 3 3" stroke="#666a75" strokeWidth="1.300" />
      </Svg>
    </button>
    <Caret className="mt-[8px] w-[5px]" />
    <button aria-label="Pohled na" className="mt-[6px]">
      <Svg box="0 0 24 24" className="size-6">
        <path d="M2 7l7-5v4h1l9-3v4" fill="#b9bcc3" stroke="#666a75" />
        <path d="M1 8h22v14H1z" fill="#c8cad0" stroke="#666a75" />
        <path d="M5 12h14v6H5z" fill="#a4a9b5" stroke="#666a75" />
      </Svg>
    </button>
    <button aria-label="Možnosti navigace" className="mt-auto mr-[2px] mb-[2px] self-end">
      <Svg box="0 0 8 8" className="size-2">
        <circle cx="4" cy="4" r="4" fill="#5d626e" />
        <path d="M2 3h4M3 4.500h2v1H3z" stroke="#d7d9de" />
      </Svg>
    </button>
  </div>
);

const Triad = () => (
  <svg viewBox="0 0 50 60" className="absolute bottom-[31px] left-[40px] h-[60px] w-[50px]" fill="none" aria-hidden="true">
    <path d="M12.500 15v24" stroke="#0a0aa0" />
    <path d="M12.500 39l14-8" stroke="#0a9010" />
    <path d="M12.500 39l14 8" stroke="#a00808" />
    <path d="M12.500 14l5.500 9q-5 4-11 0z" fill="#0808a8" />
    <path d="M23 25l11 1-5 10q-6-3-6-10z" fill="#088c10" />
    <path d="M29 41l5 10-11 2q0-9 6-12z" fill="#a80808" />
    <g fontFamily="Open Sans" fontSize="12" fontWeight="600" textAnchor="middle">
      <text x="12" y="13" fill="#4a4af5">Z</text>
      <text x="38" y="29" fill="#2fe83a">Y</text>
      <text x="38" y="58" fill="#f53838">X</text>
    </g>
  </svg>
);

const GraphicsWindow = () => (
  <div className="relative flex-1 bg-[linear-gradient(to_bottom,#7d859500_50%,#7d8595b0_66%,#a2a5af_75%,#b3b5ba_84%,#c8c9cd_98%),radial-gradient(ellipse_56%_80%_at_50%_30%,#949eb9,#7b89a5_45%,#7b89a500_100%),linear-gradient(to_bottom,#363d4d,#566074_55%)]">
    <div className="absolute top-[66px] left-[calc(50%-115px)] h-[81px] w-[401px] bg-white" />
    <div className="absolute top-[146px] right-[127px] bottom-[95px] left-[108px] bg-white" />
    <div className="absolute top-[6px] right-[2px] flex gap-2">
      <button aria-label="Minimalizovat okno">
        <Svg box="0 0 12 12" className="size-3">
          <path d="M1 8h10" stroke="#f0f0f0" strokeWidth="2" />
        </Svg>
      </button>
      <button aria-label="Obnovit okno">
        <Svg box="0 0 12 12" className="size-3">
          <path d="M2 4.500h6v6H2zM4 2h6.500v6.500" stroke="#f0f0f0" strokeWidth="1.800" />
        </Svg>
      </button>
      <button aria-label="Zavřít okno">
        <Svg box="0 0 12 12" className="size-3">
          <path d="M2 2l8 8m0-8l-8 8" stroke="#f0f0f0" strokeWidth="2.400" />
        </Svg>
      </button>
    </div>
    <ViewCube />
    <NavBar />
    <Triad />
  </div>
);

const DocumentTabs = () => (
  <div className="flex h-6 shrink-0 items-center bg-[#5e5e5e] text-[12px] text-[#d0d0d0]">
    <div className="flex h-full w-[121px] items-center gap-2 border-r border-[#909090] pl-1">
      <button aria-label="Kaskáda">
        <Svg>
          <path d="M6.700 8.700h8.600v6H6.700zM4 11V5.500h9M1 7V1.500h9" stroke="#d0d0d0" strokeWidth="1.400" />
          <path d="M3.500 8.500V5h9v2" stroke="#d0d0d0" />
        </Svg>
      </button>
      <button aria-label="Mřížka">
        <Svg>
          <path d="M1 1.500h5v5H1zM9.500 1.500h5v5h-5zM1 9.500h5v5H1zM9.500 9.500h5v5h-5z" stroke="#d0d0d0" strokeWidth="1.400" />
        </Svg>
      </button>
      <button aria-label="Vodorovně">
        <Svg>
          <path d="M.7 1.500h14.600v5H.7zM.7 9.500h14.600v5H.7z" stroke="#d0d0d0" strokeWidth="1.400" />
        </Svg>
      </button>
      <button aria-label="Svisle">
        <Svg>
          <path d="M1 1h5v14H1zM9.500 1h5v14h-5z" stroke="#d0d0d0" strokeWidth="1.400" />
        </Svg>
      </button>
      <button aria-label="Další" className="ml-[3px]">
        <Svg box="0 0 10 8" className="h-2 w-[10px]">
          <path d="M5 0l5 8H0z" fill="#d0d0d0" />
        </Svg>
      </button>
    </div>
    <button className="w-[113px]">Moje domovská...</button>
    <div className="relative flex h-full w-[120px] items-center justify-end bg-[#f5f5f5] pr-[12px]">
      <Svg box="0 0 86 20" className="absolute top-[3px] left-[7px] h-5 w-[86px]">
        <path d="M0 1h10v3l58 1 18 1v13H67v-4l-56-1v4H0z" fill="#fff" />
      </Svg>
      <button aria-label="Zavřít dokument">
        <Svg box="0 0 9 9" className="size-[9px]">
          <path d="M1 1l7 7m0-7l-7 7" stroke="#4a4a4a" strokeWidth="2" />
        </Svg>
      </button>
    </div>
  </div>
);

const StatusBar = () => (
  <div className="flex h-6 shrink-0 items-center bg-[#f5f5f5] pt-px pl-[1px] text-[11px] text-black">
    <span>Připraven</span>
    <div className="ml-auto flex h-5">
      <span className="w-10 border-l border-[#c8c8c8] pl-[10px] leading-5">1</span>
      <span className="w-[39px] border-x border-[#c8c8c8] pl-2 leading-5">1</span>
    </div>
  </div>
);

/* ---------- taskbar ---------- */

const OfficeIcon = ({ letter, color, children }: { letter: string; color: string; children: ReactNode }) => (
  <Svg box="0 0 24 24" className="size-6">
    {children}
    <path d="M1 3l13-2.500v23L1 21z" fill={color} />
    <text x="7.500" y="16" textAnchor="middle" fontSize="11" fontWeight="bold" fill="#fff" fontFamily="Open Sans">
      {letter}
    </text>
  </Svg>
);

const apps = [
  {
    name: "Průzkumník souborů",
    icon: (
      <Svg box="0 0 24 24" className="size-6">
        <path d="M2 4V3h8l1 2h12v16H2z" fill="#f7d774" />
        <path d="M2 7h21v14H2z" fill="#fde38f" />
        <path d="M6 22v-7q0-2 2-2h9q2 0 2 2v7h-4v-4h-5v4z" fill="#37a8e6" />
      </Svg>
    ),
  },
  {
    name: "Edge",
    icon: (
      <Svg box="0 0 24 24" className="size-6">
        <path
          d="M2 10.500C3 4.500 7 1.500 12 1.500c6 0 9.500 4 9.500 9.500v3H8.500c.3 3.500 3 4.800 6 4.800 2.300 0 4.200-.6 5.700-1.600v4.300C18.500 22.500 16 23 13.500 23 8 23 4 20 4 15c0-4 2.500-6.700 5.500-8C5.500 7.300 3.200 9 2 10.500zm6.700-.3h7.800c0-2.400-1.500-3.700-3.700-3.700s-3.700 1.400-4.100 3.700z"
          fill="#0c7bdc"
        />
      </Svg>
    ),
  },
  {
    name: "Outlook",
    icon: (
      <OfficeIcon letter="O" color="#0072c6">
        <path d="M13 6h10v13H13z" fill="#fff" />
        <path d="M13 6h10v3l-5 5-4-4z" fill="#0072c6" />
        <path d="M13 7.500l5 4.500 5-5" stroke="#fff" strokeWidth="1.500" />
      </OfficeIcon>
    ),
  },
  {
    name: "Excel",
    icon: (
      <OfficeIcon letter="X" color="#1e7145">
        <path d="M12.500 4.500h10v15h-10z" fill="#fff" stroke="#1e7145" />
        <path d="M14 7.500h8m-8 3h8m-8 3h8m-8 3h8M18 5v14" stroke="#1e7145" />
      </OfficeIcon>
    ),
  },
  {
    name: "AutoCAD",
    icon: (
      <Svg box="0 0 24 24" className="size-6">
        <path d="M0 0h24v24H0z" fill="#fbe4de" />
        <text x="12" y="20.500" textAnchor="middle" fontSize="24" fontWeight="bold" fill="#c8202c" fontFamily="Liberation Sans">
          A
        </text>
      </Svg>
    ),
  },
  {
    name: "Fotky",
    icon: (
      <Svg box="0 0 24 24" className="size-6">
        <path d="M1.500 1.500h21v21h-21z" fill="#000" stroke="#fff" />
        <path d="M2 17l6-9h1l5 7 3-5 2 4h1l2 3v5H2z" fill="#fff" />
      </Svg>
    ),
  },
  {
    name: "Poznámkový blok",
    icon: (
      <Svg box="0 0 24 24" className="size-6">
        <path d="M20 4l2 17-4 1z" fill="#8d7440" />
        <path d="M9 2.500L20.500 4 17 21.500 1.500 17z" fill="#7fc6d6" />
        <path d="M9 2.500L20.500 4l-1 5L6 7z" fill="#b7e2ea" />
        <path d="M1.500 17L17 21.500l2 .5-15-3.500z" fill="#e5eef0" />
      </Svg>
    ),
  },
  {
    name: "Inventor",
    active: true,
    icon: (
      <Svg box="0 0 24 24" className="size-6">
        <path d="M0 0h24v24H0z" fill="#fde0c0" />
        <path d="M7 2h9v3h-2v10h2v3H7v-3h2V5H7z" fill="#c8731f" />
        <text x="13" y="23" fontSize="5" fontWeight="bold" fill="#f08228" fontFamily="Liberation Sans">
          PRO
        </text>
      </Svg>
    ),
  },
  {
    name: "Word",
    icon: (
      <OfficeIcon letter="W" color="#2b579a">
        <path d="M12.500 3.500h10v17h-10z" fill="#fff" stroke="#2b579a" />
        <path d="M15 6.500h6m-6 3h6m-6 3h6m-6 3h6m-6 2.500h6" stroke="#2b579a" />
      </OfficeIcon>
    ),
  },
];

const Taskbar = () => (
  <footer className="flex h-10 shrink-0 items-stretch bg-black text-[11px] text-white">
    <button aria-label="Start" className="flex w-12 items-center justify-center">
      <Svg>
        <path d="M0 2.300l7-1v6.300H0zM8 1.200L16 0v7.600H8zM0 8.500h7v6.300l-7-1zM8 8.500h8V16l-8-1.200z" fill="#fff" />
      </Svg>
    </button>
    <button aria-label="Hledat" className="flex w-12 items-center justify-center">
      <Svg>
        <circle cx="10.500" cy="5.500" r="4.800" stroke="#fff" strokeWidth="1.300" />
        <path d="M7 9L.5 15.500" stroke="#fff" strokeWidth="1.300" />
      </Svg>
    </button>
    <button aria-label="Zobrazení úkolů" className="mr-[2px] flex w-12 items-center justify-center">
      <Svg box="0 0 20 16" className="h-4 w-5">
        <path d="M4.500 1.500h11v13h-11zM3 3.500H.7v9H3M17 3.500h2.300v9H17" stroke="#fff" strokeWidth="1.200" />
      </Svg>
    </button>
    {apps.map((app) => (
      <button
        key={app.name}
        aria-label={app.name}
        className={clsx(
          "relative flex w-[49px] items-center justify-center",
          app.active && "bg-[#333]",
        )}
      >
        {app.icon}
        <span className={clsx("absolute bottom-0 h-[2px] bg-[#fbc9a4]", app.active ? "w-full" : "w-10")} />
      </button>
    ))}
    <div className="relative w-[49px]">
      <span className="absolute bottom-0 left-[5px] h-[2px] w-10 bg-[#fbc9a4]" />
      <Svg box="0 0 36 39" className="absolute bottom-0 left-[4px] h-[39px] w-9">
        <path d="M0 8l5-3 12-1 9-4h10v9l-2 18v12H8L6 32 2 26 0 15z" fill="#fff" />
      </Svg>
    </div>
    <div className="ml-auto flex items-center">
      <Svg className="mr-[22px] size-4">
        <circle cx="11" cy="4" r="2.700" stroke="#fff" strokeWidth="1.300" />
        <circle cx="5.500" cy="8.500" r="2.500" stroke="#fff" strokeWidth="1.300" />
        <path d="M1 15.500c0-6 8-6 9 0M9 8c3-2 6 0 6 3" stroke="#fff" strokeWidth="1.300" />
      </Svg>
      <Svg box="0 0 12 8" className="mr-[10px] h-2 w-3">
        <path d="M1 7l5-5 5 5" stroke="#fff" strokeWidth="1.400" />
      </Svg>
      <Svg className="mr-2 size-4">
        <path d="M4.500 3.500h11v8h-11zM10 12v2.500M6 14.700h8M.7 2.500h4v4h-4zM2.700 7v8" stroke="#fff" strokeWidth="1.200" />
      </Svg>
      <Svg className="mr-3 size-4">
        <path d="M.7 5.500H3l3.500-3v11l-3.500-3H.7z" stroke="#fff" strokeWidth="1.200" />
        <path d="M8.500 5.500c1 1.500 1 3.500 0 5" stroke="#fff" strokeWidth="1.200" />
        <path d="M11 4c2 2.500 2 5.500 0 8M13.500 2.500c2.500 3 2.500 8 0 11" stroke="#888" strokeWidth="1.200" />
      </Svg>
      <span>CES</span>
      <time className="ml-[11px] flex w-[60px] flex-col items-center leading-[18px]">
        <span>12:14</span>
        <span>03.07.2018</span>
      </time>
      <Svg className="mr-5 ml-4 size-4">
        <path d="M.7 1.500h14.600v11H10.500l-2.500 3-2.500-3H.7z" stroke="#fff" strokeWidth="1.300" />
      </Svg>
      <span className="mr-1 h-10 w-px bg-[#555]" />
    </div>
  </footer>
);

export default function App() {
  return (
    <div className="flex h-screen min-h-[900px] w-full flex-col overflow-hidden bg-black pl-[3px] font-['Open_Sans','Noto_Sans',sans-serif]">
      <TitleBar />
      <RibbonTabs />
      <Ribbon />
      <main className="relative flex flex-1 text-[11px] font-['DejaVu_Sans_Condensed','DejaVu_Sans',sans-serif]">
        <RulesPanel />
        <span className="w-1 shrink-0 bg-[#505050]" />
        <div className="flex min-w-0 flex-1 flex-col font-['Open_Sans','Noto_Sans',sans-serif]">
          <GraphicsWindow />
          <DocumentTabs />
        </div>
        <div className="font-['Open_Sans','Noto_Sans',sans-serif]">
          <Markup />
        </div>
      </main>
      <StatusBar />
      <Taskbar />
    </div>
  );
}
